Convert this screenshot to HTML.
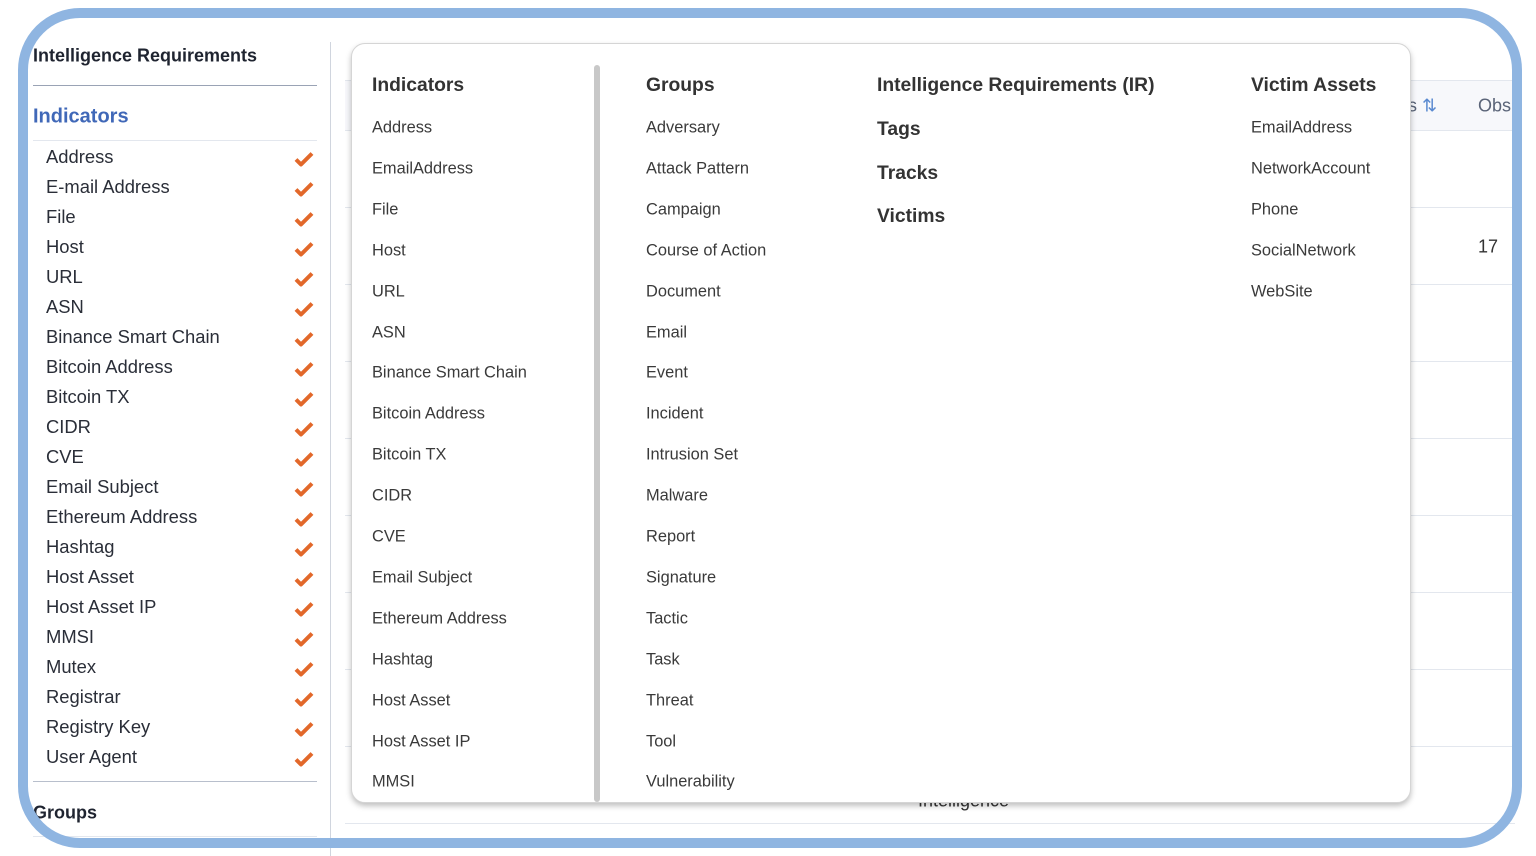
<!DOCTYPE html><html><head><style>
body{margin:0;width:1536px;height:856px;background:#fff;position:relative;overflow:hidden;font-family:"Liberation Sans",sans-serif}
.a{position:absolute;white-space:nowrap}
.frame{position:absolute;left:18px;top:8px;width:1484px;height:820px;border:10px solid #8fb5e1;border-radius:62px;}
.l{font-size:18.4px;color:#2a2e38;left:46px;transform:translateY(-50%)}
.ck{left:294px;transform:translateY(-50%)}
.p{font-size:16.4px;color:#3a3a3a;transform:translateY(-50%)}
.h{font-size:19.3px;color:#333;font-weight:600;transform:translateY(-50%)}
.hl{position:absolute;height:1px;background:#e3e7ee}
</style></head><body>
<div class="a" style="left:33px;top:56px;transform:translateY(-50%);font-size:18px;font-weight:bold;color:#1f2430">Intelligence Requirements</div>
<div class="hl" style="left:33px;top:85px;width:284px;background:#9aa3b5"></div>
<div class="a" style="left:33px;top:117px;transform:translateY(-50%);font-size:20px;font-weight:bold;color:#4068b8">Indicators</div>
<div class="hl" style="left:33px;top:140px;width:284px"></div>
<div class="hl" style="left:33px;top:781px;width:284px;background:#b8bfcc"></div>
<div class="a" style="left:33px;top:813px;transform:translateY(-50%);font-size:18px;font-weight:bold;color:#1f2430">Groups</div>
<div class="hl" style="left:33px;top:836px;width:284px"></div>
<div class="a" style="left:330px;top:42px;width:1px;height:814px;background:#d0d5de"></div>
<div class="a" style="left:345px;top:80px;width:1170px;height:50px;background:#f7f8fb"></div>
<div class="hl" style="left:345px;top:80px;width:1170px"></div>
<div class="hl" style="left:345px;top:130px;width:1170px"></div>
<div class="hl" style="left:345px;top:207px;width:1170px"></div>
<div class="hl" style="left:345px;top:284px;width:1170px"></div>
<div class="hl" style="left:345px;top:361px;width:1170px"></div>
<div class="hl" style="left:345px;top:438px;width:1170px"></div>
<div class="hl" style="left:345px;top:515px;width:1170px"></div>
<div class="hl" style="left:345px;top:592px;width:1170px"></div>
<div class="hl" style="left:345px;top:669px;width:1170px"></div>
<div class="hl" style="left:345px;top:746px;width:1170px"></div>
<div class="hl" style="left:345px;top:823px;width:1170px"></div>
<div class="a" style="left:1408px;top:106px;transform:translateY(-50%);font-size:18px;color:#5a6478">s <span style="color:#5a8ad0">⇅</span></div>
<div class="a" style="left:1478px;top:106px;transform:translateY(-50%);font-size:18px;color:#5a6478">Obs</div>
<div class="a" style="left:1478px;top:247px;transform:translateY(-50%);font-size:18px;color:#333">17</div>
<div class="a" style="left:918px;top:801px;transform:translateY(-50%);font-size:18px;color:#333">Intelligence</div>
<div id="L"></div>
<div class="a" style="left:351px;top:43px;width:1058px;height:758px;background:#fff;border:1px solid #d5d5d5;border-radius:14px;box-shadow:0 3px 6px rgba(0,0,0,.25)"></div>
<div class="a" style="left:594px;top:65px;width:6px;height:737px;background:#c8c8c8;border-radius:3px"></div>
<div id="P"></div>
<div class="frame"></div>
<script>
var L=["Address","E-mail Address","File","Host","URL","ASN","Binance Smart Chain","Bitcoin Address","Bitcoin TX","CIDR","CVE","Email Subject","Ethereum Address","Hashtag","Host Asset","Host Asset IP","MMSI","Mutex","Registrar","Registry Key","User Agent"];
var s="";L.forEach(function(t,i){var y=157+i*30;s+='<div class="a l" style="top:'+y+'px">'+t+'</div><svg class="a ck" style="top:'+(y+2)+'px" width="20" height="16" viewBox="0 0 20 16"><path d="M2 8.5l5 5L18 2.5" fill="none" stroke="#e2682a" stroke-width="4" stroke-linejoin="round"/></svg>';});
document.getElementById("L").innerHTML=s;
var I=["Address","EmailAddress","File","Host","URL","ASN","Binance Smart Chain","Bitcoin Address","Bitcoin TX","CIDR","CVE","Email Subject","Ethereum Address","Hashtag","Host Asset","Host Asset IP","MMSI"];
var G=["Adversary","Attack Pattern","Campaign","Course of Action","Document","Email","Event","Incident","Intrusion Set","Malware","Report","Signature","Tactic","Task","Threat","Tool","Vulnerability"];
var V=["EmailAddress","NetworkAccount","Phone","SocialNetwork","WebSite"];
var p='<div class="a h" style="left:372px;top:86px">Indicators</div><div class="a h" style="left:646px;top:86px">Groups</div><div class="a h" style="left:877px;top:86px">Intelligence Requirements (IR)</div><div class="a h" style="left:877px;top:130px">Tags</div><div class="a h" style="left:877px;top:174px">Tracks</div><div class="a h" style="left:877px;top:217px">Victims</div><div class="a h" style="left:1251px;top:86px">Victim Assets</div>';
function col(a,x){a.forEach(function(t,i){p+='<div class="a p" style="left:'+x+'px;top:'+(128+i*40.9)+'px">'+t+'</div>';});}
col(I,372);col(G,646);col(V,1251);
document.getElementById("P").innerHTML=p;
</script>
</body></html>
